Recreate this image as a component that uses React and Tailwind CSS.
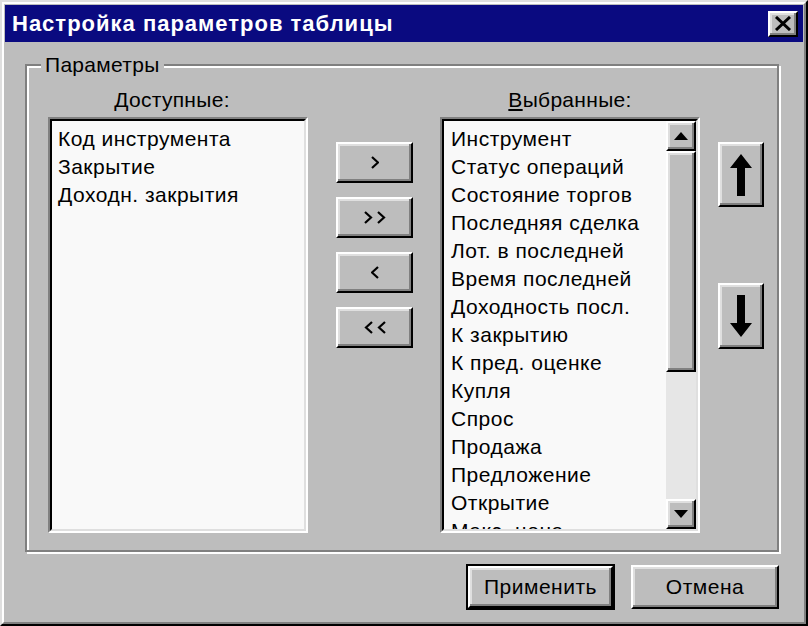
import React from "react";

const raised =
  "bg-[#bdbdbd] border-2 border-t-white border-l-white border-r-black border-b-black shadow-[inset_-2px_-2px_0_#808080,inset_2px_2px_0_#dfdfdf]";

function Sunken({ className = "", children }) {
  return (
    <div className={"border-2 border-t-[#808080] border-l-[#808080] border-r-white border-b-white " + className}>
      <div className="h-full border-2 border-t-black border-l-black border-r-[#dfdfdf] border-b-[#dfdfdf] bg-[#f9f9f9] overflow-hidden">
        {children}
      </div>
    </div>
  );
}

function Tri({ down }) {
  return (
    <svg width="14" height="8" viewBox="0 0 14 8">
      {down ? <polygon points="0,0 14,0 7,8" fill="black" /> : <polygon points="0,8 14,8 7,0" fill="black" />}
    </svg>
  );
}

function BigArrow({ down }) {
  return (
    <svg width="22" height="42" viewBox="0 0 22 42" className={down ? "rotate-180" : ""}>
      <polygon points="11,0 22,14 15,14 15,42 7,42 7,14 0,14" fill="black" />
    </svg>
  );
}

function Chevrons({ count, left }) {
  const w = count === 1 ? 8 : 22;
  return (
    <svg width={w} height="13" viewBox={`0 0 ${w} 13`} className={left ? "-scale-x-100" : ""}>
      <polyline points="1,1 7,6.5 1,12" fill="none" stroke="black" strokeWidth="2.2" />
      {count === 2 && <polyline points="14,1 20,6.5 14,12" fill="none" stroke="black" strokeWidth="2.2" />}
    </svg>
  );
}

const available = ["Код инструмента", "Закрытие", "Доходн. закрытия"];
const selected = [
  "Инструмент",
  "Статус операций",
  "Состояние торгов",
  "Последняя сделка",
  "Лот. в последней",
  "Время последней",
  "Доходность посл.",
  "К закрытию",
  "К пред. оценке",
  "Купля",
  "Спрос",
  "Продажа",
  "Предложение",
  "Открытие",
  "Макс. цена",
];

export default function App() {
  return (
    <div className="w-[808px] h-[626px] bg-[#bdbdbd] border-2 border-t-[#dfdfdf] border-l-[#dfdfdf] border-r-black border-b-black font-['Liberation_Sans',Arial,sans-serif] text-black overflow-hidden">
      <div className="h-full border-2 border-t-white border-l-white border-r-[#808080] border-b-[#808080] p-[1px] flex flex-col">
        {/* title bar */}
        <div className="h-[37px] bg-[#0a0a80] flex items-center justify-between">
          <span className="pl-[7px] text-white font-bold text-[22px] leading-none tracking-[1px]">
            Настройка параметров таблицы
          </span>
          <button className={"w-[30px] h-[26px] mr-[5px] flex items-center justify-center " + raised}>
            <svg width="18" height="15" viewBox="0 0 18 15">
              <path d="M2 1 L16 14 M16 1 L2 14" stroke="black" strokeWidth="3" />
            </svg>
          </button>
        </div>

        {/* group box */}
        <div className="relative ml-[20px] mt-[22px] w-[754px] h-[488px] border-2 border-[#808080] shadow-[inset_2px_2px_0_white,2px_2px_0_white]">
          <span className="absolute -top-[14px] left-[14px] bg-[#bdbdbd] px-[4px] text-[21px] leading-[26px] tracking-[0.3px]">
            Параметры
          </span>
          <div className="flex pl-[21px] pt-[20px]">
            {/* left column */}
            <div className="w-[260px] flex flex-col">
              <div className="h-[28px] leading-[28px] text-[21px] text-center pr-[12px] tracking-[0.3px]">
                <u>Д</u>оступные:
              </div>
              <Sunken className="mt-[3px] h-[416px]">
                <div className="pt-[4px] pl-[6px] text-[21px] leading-[28px] tracking-[0.5px]">
                  {available.map((t) => (
                    <div key={t} className="whitespace-nowrap">{t}</div>
                  ))}
                </div>
              </Sunken>
            </div>

            {/* move buttons */}
            <div className="ml-[28px] w-[77px] pt-[56px] flex flex-col gap-[14px]">
              {[
                [1, false],
                [2, false],
                [1, true],
                [2, true],
              ].map(([c, l], i) => (
                <button key={i} className={"h-[41px] flex items-center justify-center " + raised}>
                  <Chevrons count={c} left={l} />
                </button>
              ))}
            </div>

            {/* right column */}
            <div className="ml-[27px] w-[260px] flex flex-col">
              <div className="h-[28px] leading-[28px] text-[21px] text-center tracking-[0.3px]">
                <u>В</u>ыбранные:
              </div>
              <Sunken className="mt-[3px] h-[416px]">
                <div className="flex h-full">
                  <div className="flex-1 pt-[4px] pl-[7px] text-[21px] leading-[28px] tracking-[0.5px] overflow-hidden">
                    {selected.map((t) => (
                      <div key={t} className="whitespace-nowrap">{t}</div>
                    ))}
                  </div>
                  <div className="w-[30px] flex flex-col">
                    <div className={"h-[30px] flex items-center justify-center " + raised}>
                      <Tri />
                    </div>
                    <div className={"h-[221px] " + raised}></div>
                    <div className="flex-1 bg-[#e6e6e6]"></div>
                    <div className={"h-[30px] flex items-center justify-center " + raised}>
                      <Tri down />
                    </div>
                  </div>
                </div>
              </Sunken>
            </div>

            {/* order buttons */}
            <div className="ml-[18px] w-[46px] pt-[56px] flex flex-col">
              <button className={"h-[65px] flex items-center justify-center " + raised}>
                <BigArrow />
              </button>
              <button className={"mt-[76px] h-[66px] flex items-center justify-center " + raised}>
                <BigArrow down />
              </button>
            </div>
          </div>
        </div>

        {/* bottom buttons */}
        <div className="ml-[20px] w-[754px] mt-[12px] flex justify-end items-start gap-[16px]">
          <div className="w-[149px] h-[46px] border-2 border-black">
            <button className={"w-full h-full flex items-center justify-center text-[21px] tracking-[0.5px] " + raised}>
              Применить
            </button>
          </div>
          <button className={"mt-[1px] w-[148px] h-[44px] flex items-center justify-center text-[21px] tracking-[0.5px] " + raised}>
            Отмена
          </button>
        </div>
      </div>
    </div>
  );
}
